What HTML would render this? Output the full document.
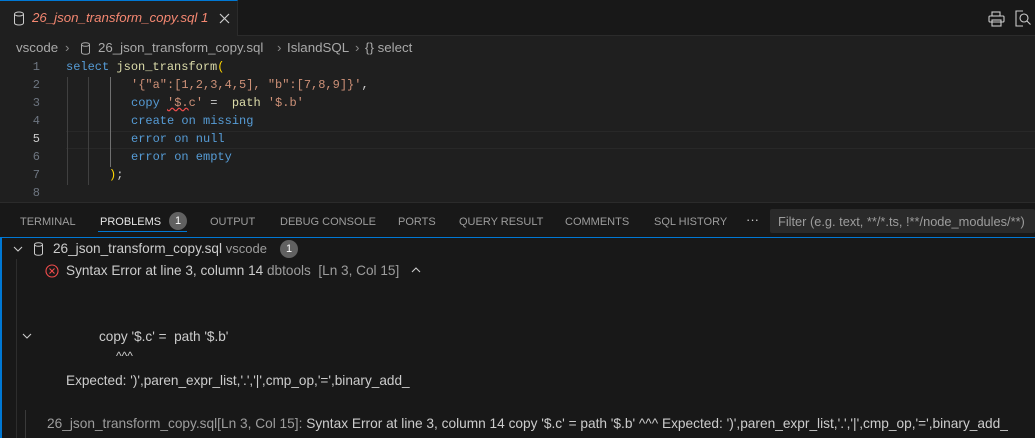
<!DOCTYPE html>
<html><head><meta charset="utf-8"><style>
*{margin:0;padding:0;box-sizing:border-box}
body{width:1035px;height:438px;background:#1f1f1f;font-family:"Liberation Sans",sans-serif;color:#ccc;position:relative;overflow:hidden;font-size:13px}
.a{position:absolute;white-space:pre}
.m{font-family:"Liberation Mono",monospace;font-size:12px}
.ln{color:#6e7681;width:40px;text-align:right;left:0}
.kw{color:#569cd6}.fn{color:#dcdcaa}.st{color:#ce9178}.pn{color:#ffd700}
.bc{top:40px;color:#a9a9a9;font-size:13.3px}
.pt{top:216px;font-size:11px;color:#9d9d9d}
</style></head><body>
<div class="a" style="left:0;top:0;width:1035px;height:36px;background:#181818;border-bottom:1px solid #2b2b2b"></div>
<div class="a" style="left:0;top:0;width:238px;height:36px;background:#1f1f1f;border-top:1px solid #0078d4;border-right:1px solid #2b2b2b"></div>
<svg class="a" style="left:13px;top:11px" width="12" height="15" viewBox="0 0 12 15"><ellipse cx="6" cy="3" rx="4.5" ry="2" fill="none" stroke="#ccc"/><path d="M1.5 3v9c0 1.2 2 2 4.5 2s4.5-.8 4.5-2V3" fill="none" stroke="#ccc"/></svg>
<div class="a" style="left:32px;top:10px;color:#f48771;font-style:italic;font-size:13.3px">26_json_transform_copy.sql 1</div>
<svg class="a" style="left:219px;top:13px" width="11" height="11" viewBox="0 0 11 11" stroke="#ccc" stroke-width="1.2"><path d="M1 1l9 9M10 1l-9 9"/></svg>
<svg class="a" style="left:988px;top:11px" width="17" height="16" viewBox="0 0 17 16" fill="none" stroke="#ccc" stroke-width="1.1"><rect x="4" y="1" width="8" height="4"/><rect x="1" y="5" width="15" height="6" rx="1"/><rect x="4" y="9" width="9" height="6"/></svg>
<svg class="a" style="left:1015px;top:10px" width="16" height="17" viewBox="0 0 16 17" fill="none" stroke="#ccc" stroke-width="1.1"><path d="M8 1H1v15h7"/><circle cx="9" cy="8" r="4"/><path d="M12 11l3.5 3.5"/></svg>
<div class="a bc" style="left:16px">vscode</div>
<div class="a bc" style="left:65px;color:#888">›</div>
<svg class="a" style="left:80px;top:42px" width="11" height="13" viewBox="0 0 11 13"><ellipse cx="5.5" cy="2.5" rx="4" ry="1.8" fill="none" stroke="#aaa"/><path d="M1.5 2.5v8c0 1 1.8 1.8 4 1.8s4-.8 4-1.8v-8" fill="none" stroke="#aaa"/></svg>
<div class="a bc" style="left:98px">26_json_transform_copy.sql</div>
<div class="a bc" style="left:277px;color:#888">›</div>
<div class="a bc" style="left:287px">IslandSQL</div>
<div class="a bc" style="left:355px;color:#888">›</div>
<div class="a bc" style="left:365px">{} select</div>
<div class="a" style="left:66px;top:131px;width:969px;height:18px;border-top:1px solid #282828;border-bottom:1px solid #282828"></div>
<div class="a" style="left:67px;top:77px;width:1px;height:108px;background:#404040"></div>
<div class="a" style="left:88px;top:77px;width:1px;height:108px;background:#404040"></div>
<div class="a" style="left:110px;top:77px;width:1px;height:90px;background:#707070"></div>
<div class="a m ln" style="top:60px">1</div><div class="a m ln" style="top:78px">2</div><div class="a m ln" style="top:96px">3</div><div class="a m ln" style="top:114px">4</div><div class="a m ln" style="top:132px;color:#ccc">5</div><div class="a m ln" style="top:150px">6</div><div class="a m ln" style="top:168px">7</div><div class="a m ln" style="top:186px">8</div>
<div class="a m" style="left:66px;top:60px"><span class="kw">select</span> <span class="fn">json_transform</span><span class="pn">(</span></div>
<div class="a m st" style="left:131px;top:78px">'{"a":[1,2,3,4,5], "b":[7,8,9]}'<span style="color:#ccc">,</span></div>
<div class="a m" style="left:131px;top:96px"><span class="kw">copy</span> <span class="st" style="text-decoration:underline wavy #f14c4c">'$.</span><span class="st">c'</span> <span style="color:#ccc">=</span>  <span class="fn">path</span> <span class="st">'$.b'</span></div>
<div class="a m kw" style="left:131px;top:114px">create on missing</div>
<div class="a m kw" style="left:131px;top:132px">error on null</div>
<div class="a m kw" style="left:131px;top:150px">error on empty</div>
<div class="a m" style="left:109px;top:168px"><span class="pn">)</span><span style="color:#ccc">;</span></div>
<div class="a" style="left:0;top:202px;width:1035px;height:236px;background:#181818;border-top:1px solid #2b2b2b"></div>
<div class="a" style="left:0;top:237px;width:1035px;height:1px;background:#0078d4"></div>
<div class="a" style="left:0;top:237px;width:2px;height:201px;background:#0078d4"></div>
<div class="a pt" style="left:20px">TERMINAL</div>
<div class="a pt" style="left:100px;color:#e7e7e7">PROBLEMS</div>
<div class="a" style="top:212px;left:169px;width:18px;height:18px;border-radius:9px;background:#616161;color:#fff;font-size:11px;text-align:center;line-height:18px">1</div>
<div class="a" style="left:98px;top:231px;width:89px;height:1px;background:#0078d4"></div>
<div class="a pt" style="left:210px">OUTPUT</div>
<div class="a pt" style="left:280px">DEBUG CONSOLE</div>
<div class="a pt" style="left:398px">PORTS</div>
<div class="a pt" style="left:459px">QUERY RESULT</div>
<div class="a pt" style="left:565px">COMMENTS</div>
<div class="a pt" style="left:654px">SQL HISTORY</div>
<div class="a" style="top:212px;left:746px;font-size:13px;color:#ccc">···</div>
<div class="a" style="top:209px;left:770px;width:265px;height:24px;background:#2a2a2a;border-radius:2px;padding:5px 0 0 8px;font-size:12.8px;color:#9d9d9d">Filter (e.g. text, **/*.ts, !**/node_modules/**)</div>
<svg class="a" style="left:13px;top:246px" width="10" height="6" viewBox="0 0 10 6" fill="none" stroke="#ccc" stroke-width="1.1"><path d="M1 1l4 4 4-4"/></svg>
<svg class="a" style="left:33px;top:242px" width="11" height="14" viewBox="0 0 11 14"><ellipse cx="5.5" cy="2.5" rx="4" ry="1.8" fill="none" stroke="#ccc"/><path d="M1.5 2.5v9c0 1 1.8 1.8 4 1.8s4-.8 4-1.8v-9" fill="none" stroke="#ccc"/></svg>
<div class="a" style="left:53px;top:241px;color:#ccc;font-size:13.6px">26_json_transform_copy.sql <span style="color:#9d9d9d;font-size:13px">vscode</span></div>
<div class="a" style="top:240px;left:280px;width:18px;height:18px;border-radius:9px;background:#616161;color:#fff;font-size:11px;text-align:center;line-height:18px">1</div>
<div class="a" style="left:16px;top:259px;width:1px;height:179px;background:#2d2d2d"></div>
<svg class="a" style="left:45px;top:264px" width="14" height="14" viewBox="0 0 14 14" fill="none" stroke="#f14c4c" stroke-width="1.1"><circle cx="7" cy="7" r="6"/><path d="M4.5 4.5l5 5M9.5 4.5l-5 5"/></svg>
<div class="a" style="left:66px;top:263px;color:#ccc;font-size:13.6px">Syntax Error at line 3, column 14 <span style="color:#9d9d9d">dbtools  [Ln 3, Col 15]</span></div>
<svg class="a" style="left:411px;top:267px" width="10" height="6" viewBox="0 0 10 6" fill="none" stroke="#ccc" stroke-width="1.1"><path d="M1 5l4-4 4 4"/></svg>
<svg class="a" style="left:22px;top:333px" width="10" height="6" viewBox="0 0 10 6" fill="none" stroke="#ccc" stroke-width="1.1"><path d="M1 1l4 4 4-4"/></svg>
<div class="a" style="left:99px;top:329px;color:#ccc;font-size:13.6px">copy '$.c' =  path '$.b'</div>
<div class="a" style="left:116px;top:349px;color:#ccc;font-size:12px">^^^</div>
<div class="a" style="left:66px;top:373px;color:#ccc;font-size:13.6px">Expected: ')',paren_expr_list,'.','|',cmp_op,'=',binary_add_</div>
<div class="a" style="left:25px;top:410px;width:1px;height:28px;background:#3a3a3a"></div>
<div class="a" style="left:47px;top:416px;color:#9d9d9d;font-size:13.7px">26_json_transform_copy.sql[Ln 3, Col 15]: <span style="color:#ccc">Syntax Error at line 3, column 14 copy '$.c' = path '$.b' ^^^ Expected: ')',paren_expr_list,'.','|',cmp_op,'=',binary_add_</span></div>
</body></html>
